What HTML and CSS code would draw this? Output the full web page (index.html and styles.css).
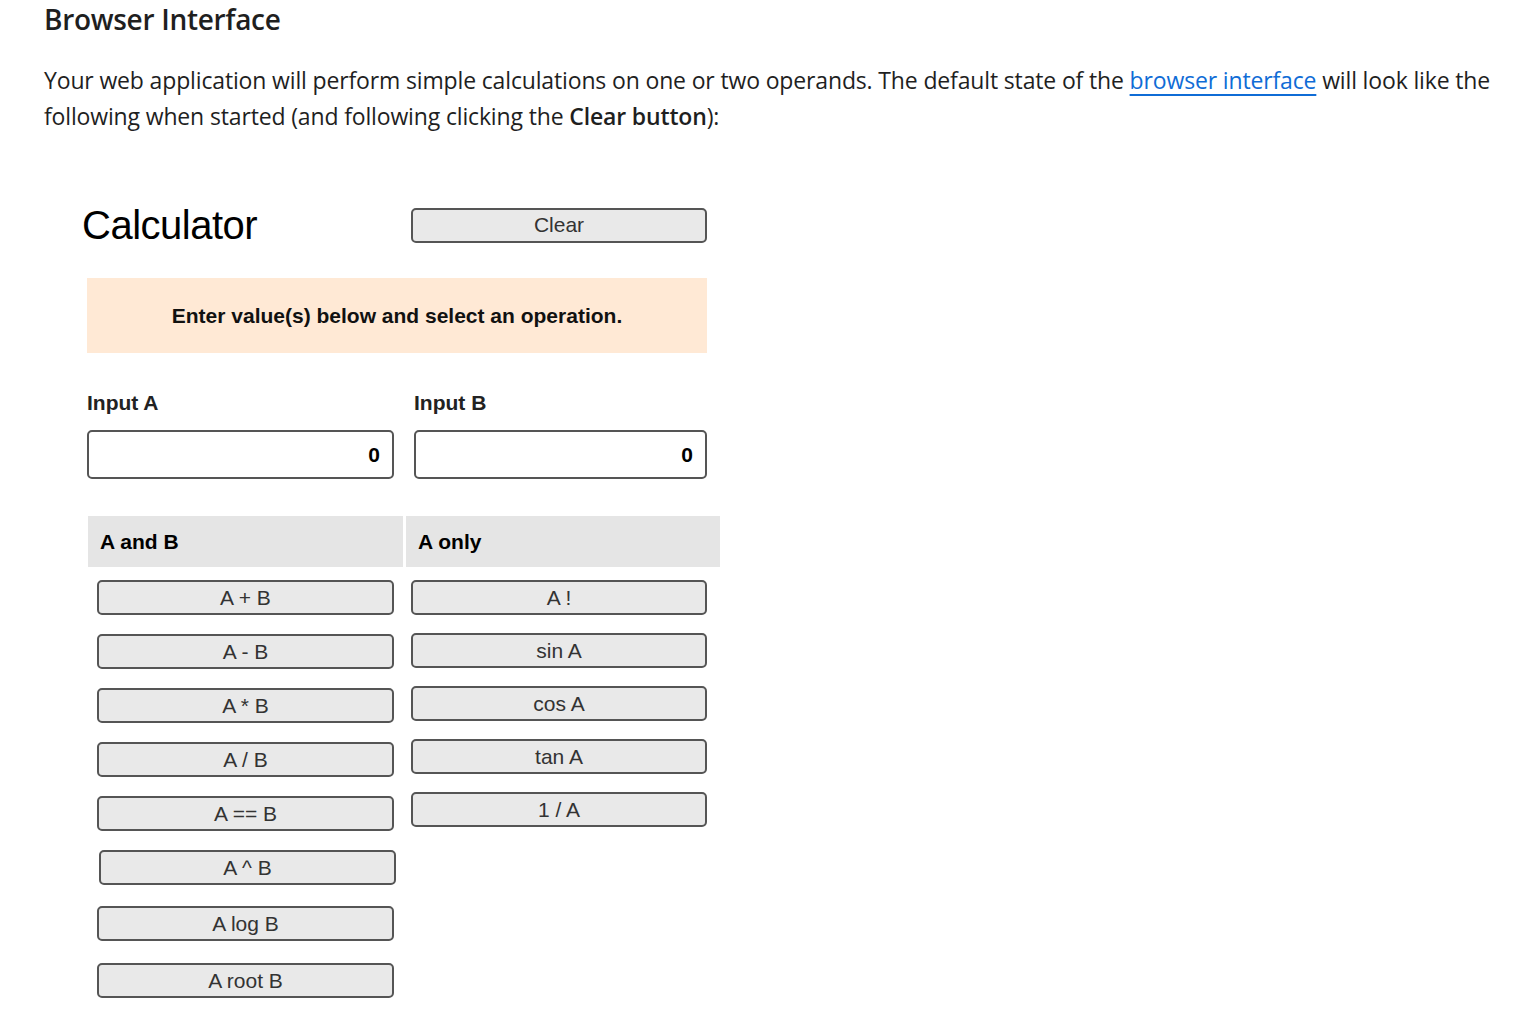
FILE: index.html
```html
<!DOCTYPE html>
<html>
<head>
<meta charset="utf-8">
<link rel="stylesheet" href="styles.css">
</head>
<body>
<div class="page">
  <h2 class="doc-title">Browser Interface</h2>
  <p class="doc-text">Your web application will perform simple calculations on one or two operands. The default state of the <a href="#" class="doc-link">browser interface</a> will look like the following when started (and following clicking the <strong>Clear button</strong>):</p>

  <div class="calc">
    <div class="calc-head">
      <div class="calc-title">Calculator</div>
      <button class="btn btn-clear">Clear</button>
    </div>
    <div class="msg">Enter value(s) below and select an operation.</div>
    <div class="inputs">
      <div class="field field-a">
        <label class="field-label">Input A</label>
        <div class="field-box">0</div>
      </div>
      <div class="field field-b">
        <label class="field-label">Input B</label>
        <div class="field-box">0</div>
      </div>
    </div>
    <div class="ops">
      <div class="col col-ab">
        <div class="col-head">A and B</div>
        <div class="col-btns">
          <button class="btn">A + B</button>
          <button class="btn">A - B</button>
          <button class="btn">A * B</button>
          <button class="btn">A / B</button>
          <button class="btn">A == B</button>
          <button class="btn btn-shift">A ^ B</button>
          <button class="btn btn-gap1">A log B</button>
          <button class="btn btn-gap2">A root B</button>
        </div>
      </div>
      <div class="col col-a">
        <div class="col-head">A only</div>
        <div class="col-btns">
          <button class="btn">A !</button>
          <button class="btn">sin A</button>
          <button class="btn">cos A</button>
          <button class="btn">tan A</button>
          <button class="btn">1 / A</button>
        </div>
      </div>
    </div>
  </div>
</div>
</body>
</html>
```
FILE: styles.css
```css
html, body {
  margin: 0;
  padding: 0;
  background: #ffffff;
}
.page {
  padding: 0 0 0 44px;
  color: #1f1f1f;
  font-family: "Open Sans", "Noto Sans", sans-serif;
}
.doc-title {
  margin: 0;
  font-size: 28px;
  font-weight: 600;
  line-height: 38px;
  letter-spacing: -0.3px;
}
.doc-text {
  margin: 24px 0 0 0;
  width: 1480px;
  font-size: 23px;
  line-height: 36px;
  letter-spacing: -0.15px;
}
.doc-text strong {
  font-weight: 600;
}
.doc-link {
  color: #0f6cd6;
  text-decoration: underline;
  text-underline-offset: 5px;
  text-decoration-thickness: 2px;
}

.calc {
  margin: 66px 0 0 38px;
  width: 640px;
  font-family: "Liberation Sans", Arial, sans-serif;
  color: #111;
}
.calc-head {
  display: flex;
  align-items: center;
}
.calc-title {
  width: 329px;
  font-size: 40px;
  line-height: 50px;
  letter-spacing: -0.5px;
  color: #000;
}
.btn {
  display: block;
  box-sizing: border-box;
  height: 35px;
  padding: 0;
  border: 2px solid #555;
  border-radius: 5px;
  background: #e9e9e9;
  font-family: "Liberation Sans", Arial, sans-serif;
  font-size: 21px;
  color: #333;
  text-align: center;
}
.btn-clear {
  width: 296px;
}
.msg {
  margin: 28px 0 0 5px;
  width: 620px;
  height: 75px;
  background: #ffe9d5;
  display: flex;
  align-items: center;
  justify-content: center;
  font-weight: bold;
  font-size: 21px;
  color: #111;
}
.inputs {
  display: flex;
  margin: 36px 0 0 5px;
  gap: 20px;
}
.field-label {
  display: block;
  font-weight: bold;
  font-size: 21px;
  line-height: 28px;
  color: #222;
}
.field-box {
  box-sizing: border-box;
  margin-top: 13px;
  height: 49px;
  border: 2px solid #555;
  border-radius: 5px;
  padding: 0 12px;
  display: flex;
  align-items: center;
  justify-content: flex-end;
  font-weight: bold;
  font-size: 21px;
  color: #000;
}
.field-a { width: 307px; }
.field-b { width: 293px; }
.ops {
  display: flex;
  gap: 3px;
  margin: 37px 0 0 6px;
}
.col-ab { width: 315px; }
.col-a { width: 314px; }
.col-head {
  height: 51px;
  background: #e5e5e5;
  display: flex;
  align-items: center;
  font-weight: bold;
  font-size: 21px;
  color: #000;
}
.col-ab .col-head { padding-left: 12px; }
.col-a .col-head { padding-left: 12px; }
.col-btns {
  display: flex;
  flex-direction: column;
  margin-top: 13px;
}
.col-ab .col-btns { gap: 19px; padding-left: 9px; }
.col-a .col-btns { gap: 18px; padding-left: 5px; }
.col-ab .btn { width: 297px; }
.col-a .btn { width: 296px; }
.btn-shift { margin-left: 2px; }
.btn-gap1 { margin-top: 2px; }
.btn-gap2 { margin-top: 3px; }
```
